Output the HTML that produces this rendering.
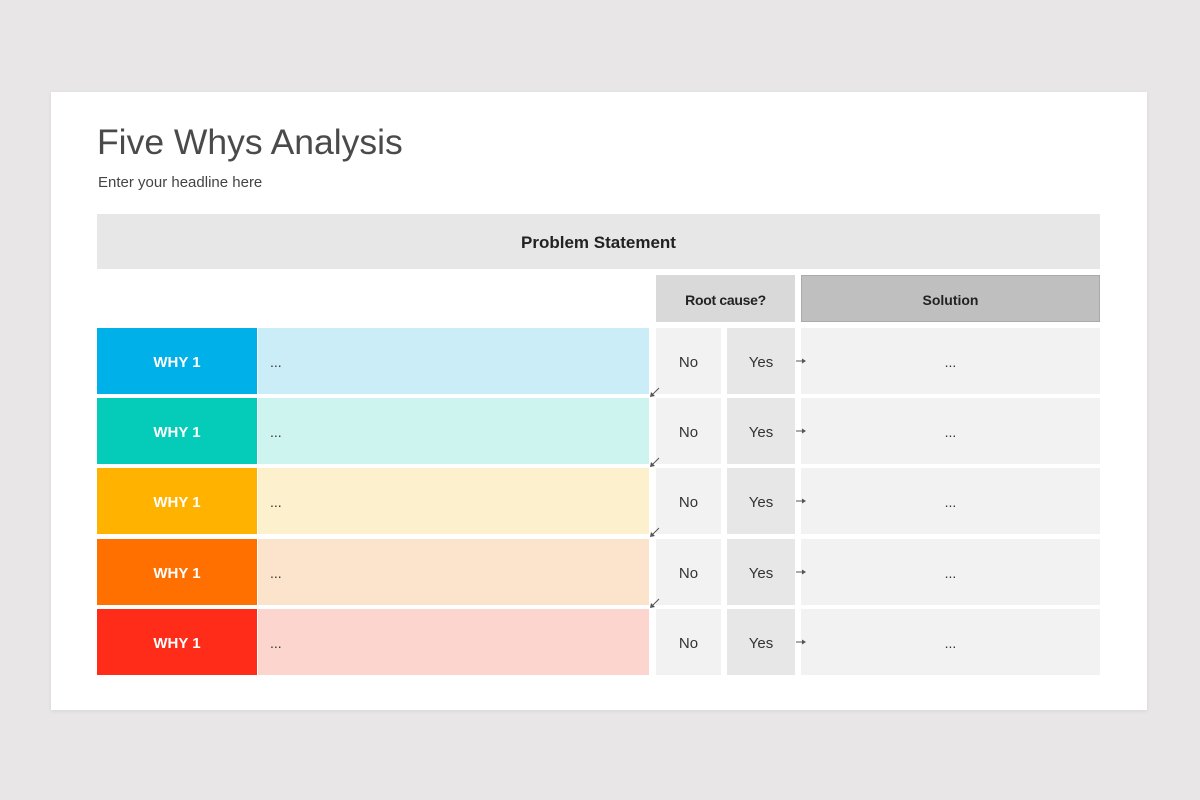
<!DOCTYPE html>
<html><head><style>
body{margin:0;width:1200px;height:800px;background:#e8e6e7;font-family:"Liberation Sans",Arial,sans-serif;position:relative;overflow:hidden}
.card{position:absolute;left:51px;top:92px;width:1096px;height:618px;background:#fff;box-shadow:0 1px 4px rgba(0,0,0,.08)}
.a{position:absolute;display:flex;align-items:center;justify-content:center;box-sizing:border-box;padding-top:2px}
h1{position:absolute;left:97px;top:122px;margin:0;font-weight:normal;font-size:35.5px;color:#4a4a4a}
.sub{position:absolute;left:98px;top:174px;font-size:15px;color:#444}
.why{color:#fff;font-weight:bold;font-size:15px}
.txt{justify-content:flex-start;padding-left:12px;font-size:14px;color:#333}
.no,.yes{font-size:15px;color:#333}
.no{background:#f2f2f2}.yes{background:#e7e7e7}
.sol{background:#f2f2f2;font-size:14px;color:#333}
</style></head><body>
<div class="card"></div>
<h1>Five Whys Analysis</h1>
<div class="sub">Enter your headline here</div>
<div class="a" style="left:97px;top:214px;width:1003px;height:55px;background:#e7e7e7;font-weight:bold;font-size:17px;color:#222">Problem Statement</div>
<div class="a" style="left:656px;top:275px;width:139px;height:47px;background:#d9d9d9;font-weight:bold;font-size:14px;color:#222;letter-spacing:-.3px">Root cause?</div>
<div class="a" style="left:801px;top:275px;width:299px;height:47px;background:#bfbfbf;border:1px solid #aaa;font-weight:bold;font-size:14px;color:#222">Solution</div>
<svg width="1200" height="800" style="position:absolute;left:0;top:0" id="s"></svg>
<div id="rows"></div>
<script>
var cols=[["#00b0e8","#cbedf7"],["#05ccb8","#cdf4ee"],["#ffb300","#fdf0cc"],["#ff7000","#fce3cc"],["#ff2c19","#fcd5cf"]];
var tops=[328,398,468,539,609],h="";
var svg="";
for(var i=0;i<5;i++){var t=tops[i];
h+='<div class="a why" style="left:97px;top:'+t+'px;width:160px;height:66px;background:'+cols[i][0]+'">WHY 1</div>';
h+='<div class="a txt" style="left:258px;top:'+t+'px;width:391px;height:66px;background:'+cols[i][1]+'">...</div>';
h+='<div class="a no" style="left:656px;top:'+t+'px;width:65px;height:66px">No</div>';
h+='<div class="a yes" style="left:727px;top:'+t+'px;width:68px;height:66px">Yes</div>';
h+='<div class="a sol" style="left:801px;top:'+t+'px;width:299px;height:66px">...</div>';
var y=t+33;
svg+='<line x1="796" y1="'+y+'" x2="803" y2="'+y+'" stroke="#555" stroke-width="1"/><path d="M802 '+(y-2.5)+'L806 '+y+'L802 '+(y+2.5)+'Z" fill="#555"/>';
if(i<4){var ay=t+60;svg+='<line x1="659" y1="'+ay+'" x2="652" y2="'+(ay+7)+'" stroke="#555" stroke-width="1"/><path d="M650 '+(ay+9)+'L651 '+(ay+4)+'L655 '+(ay+8)+'Z" fill="#555"/>';}
}
document.getElementById("rows").innerHTML=h;
document.getElementById("s").innerHTML=svg;
document.getElementById("s").style.zIndex=5;
</script>
</body></html>
